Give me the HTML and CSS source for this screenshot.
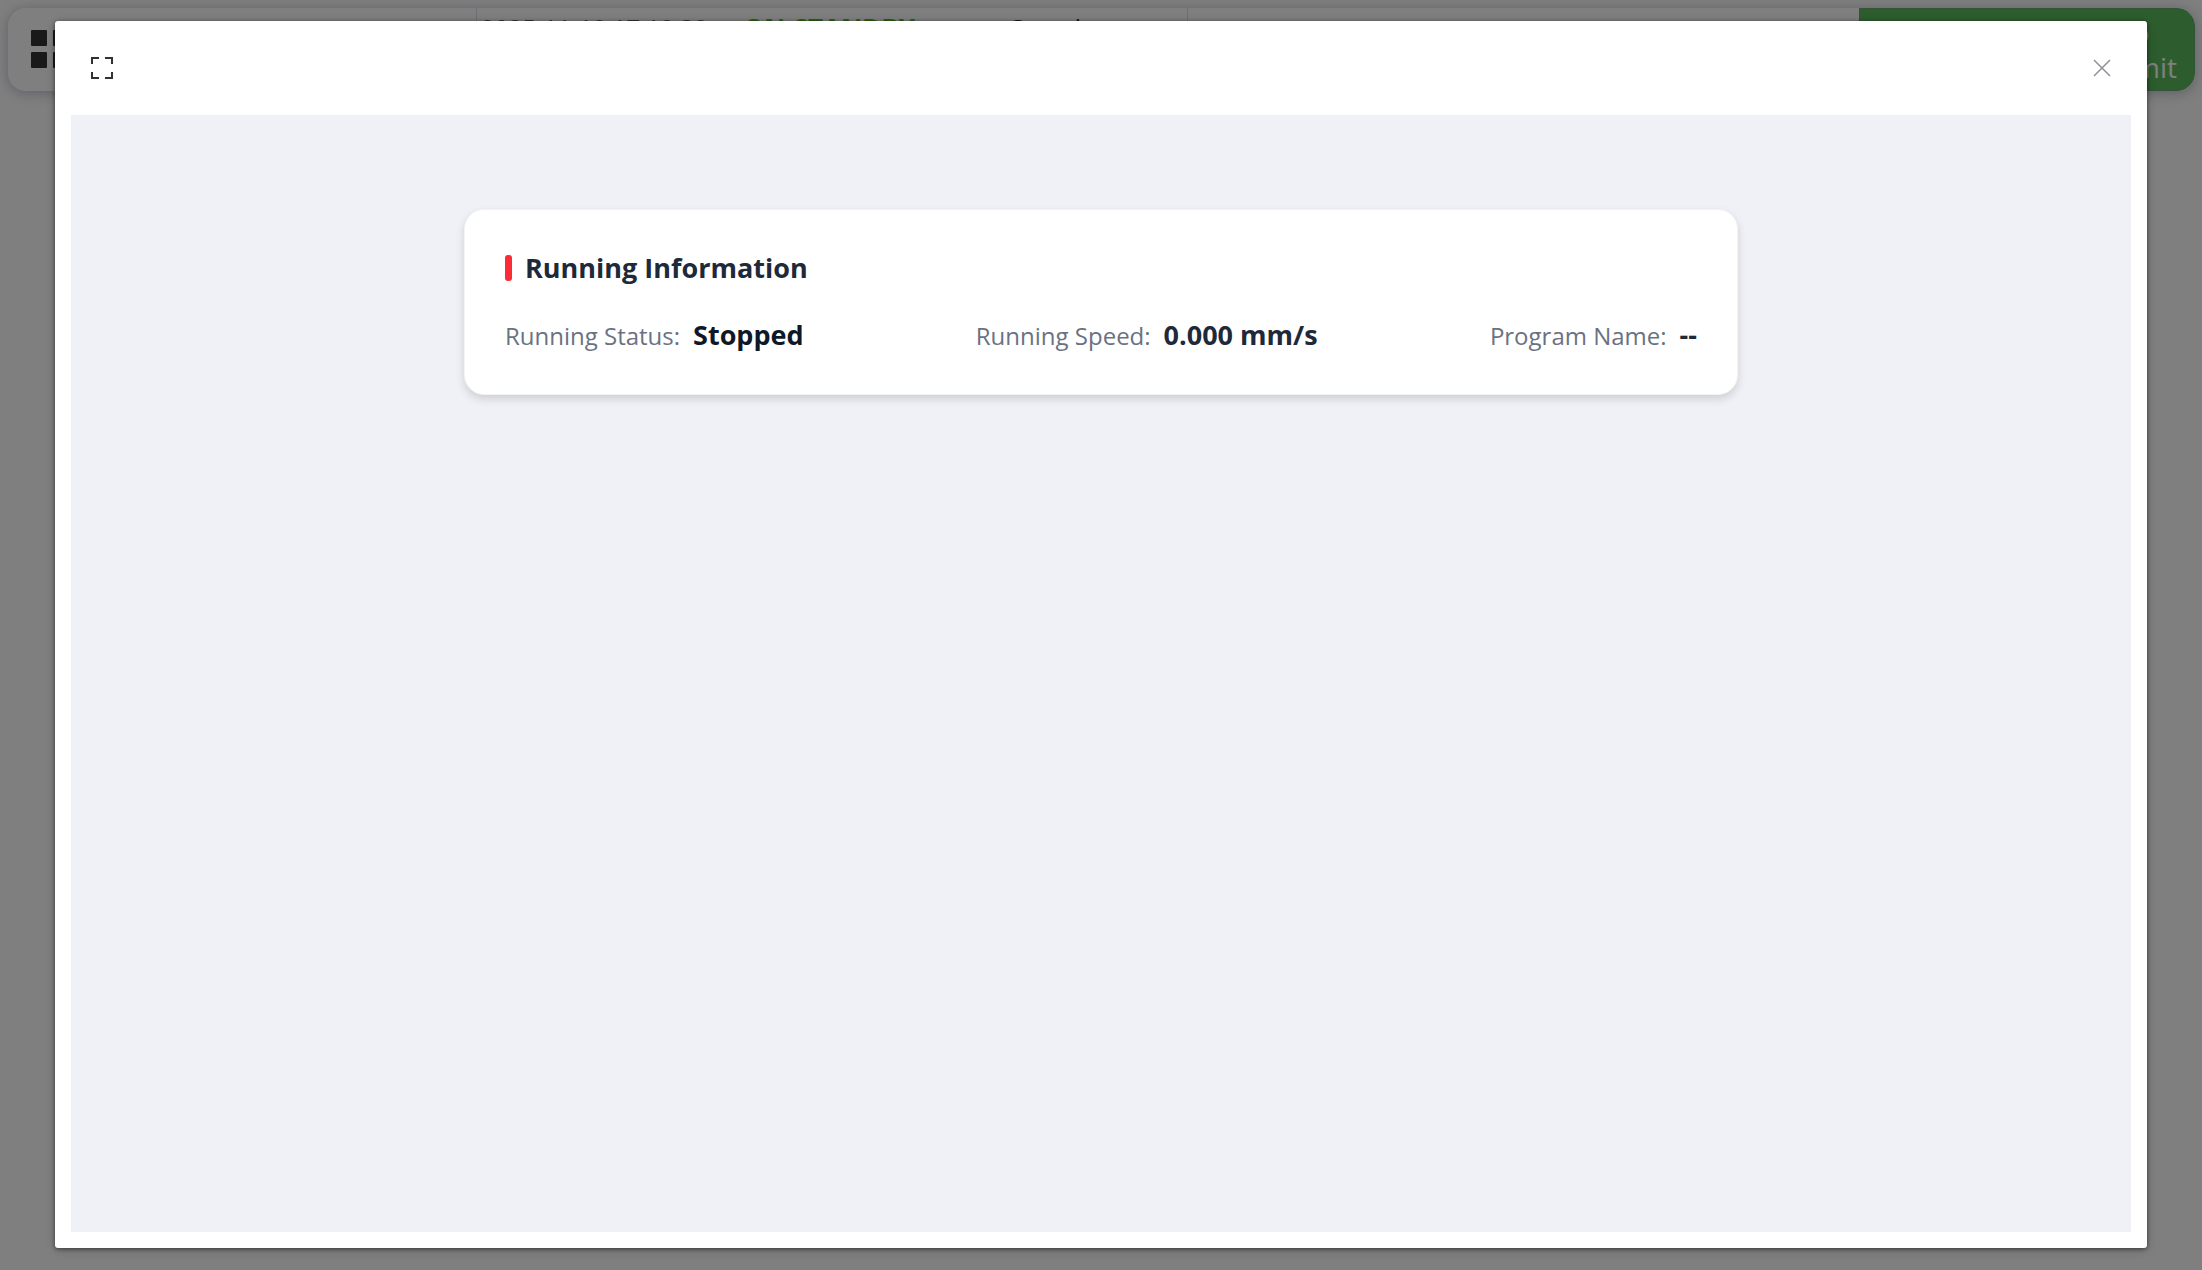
FILE: index.html
```
<!DOCTYPE html>
<html lang="en">
<head>
  <meta charset="UTF-8">
  <meta name="viewport" content="width=device-width, initial-scale=1.0">
  <title>Running Information</title>
  <link rel="stylesheet" href="styles.css">
</head>
<body>
  <header class="top-bar">
    <div class="menu-cell">
      <button type="button" class="menu-btn" aria-label="Menu">
        <span></span><span></span><span></span><span></span>
      </button>
    </div>
    <div class="state-cell">
      <time class="clock">2025-11-18 17:18:38</time>
      <span class="state">ON-STANDBY</span>
      <span class="coord">Coord</span>
    </div>
    <div class="message-cell"></div>
    <button type="button" class="submit-btn">No<br>Submit</button>
  </header>

  <div class="overlay">
    <div class="modal" role="dialog" aria-modal="true" aria-labelledby="cardTitle">
      <div class="modal-header">
        <button type="button" class="icon-btn expand-btn" aria-label="Full screen">
          <svg width="22" height="22" viewBox="0 0 22 22" fill="none" stroke="currentColor" stroke-width="2">
            <path d="M1 7V1H8M14 1H21V7M21 15V21H14M8 21H1V15"/>
          </svg>
        </button>
        <button type="button" class="icon-btn close-btn" aria-label="Close">
          <svg width="18" height="18" viewBox="0 0 18 18" fill="none" stroke="currentColor" stroke-width="1.6">
            <path d="M1 1L17 17M17 1L1 17"/>
          </svg>
        </button>
      </div>

      <div class="panel">
        <section class="card">
          <h2 class="card-title" id="cardTitle">Running Information</h2>
          <dl class="info-row">
            <div class="info-item">
              <dt>Running Status:</dt>
              <dd class="status">Stopped</dd>
            </div>
            <div class="info-item">
              <dt>Running Speed:</dt>
              <dd>0.000 mm/s</dd>
            </div>
            <div class="info-item">
              <dt>Program Name:</dt>
              <dd>--</dd>
            </div>
          </dl>
        </section>
      </div>
    </div>
  </div>
</body>
</html>
```

FILE: styles.css
```
* {
  margin: 0;
  padding: 0;
  box-sizing: border-box;
}

body {
  height: 100vh;
  padding: 8px 7px 0 8px;
  overflow: hidden;
  background-color: #ffffff;
  font-family: 'Segoe UI', 'Open Sans', 'Noto Sans', sans-serif;
}

button {
  border: none;
  background: none;
  font-family: inherit;
  cursor: pointer;
}

/* top bar */
.top-bar {
  display: grid;
  grid-template-columns: 468px 712px 1fr 336px;
  height: 83px;
  border-radius: 18px;
  background-color: #ffffff;
  box-shadow: 0 2px 14px rgba(60, 70, 110, 0.35);
  overflow: hidden;
}

.menu-cell {
  padding: 22px 23px;
}

.menu-btn {
  display: grid;
  grid-template-columns: 16px 16px;
  gap: 6px;
}

.menu-btn span {
  height: 16px;
  border-radius: 1px;
  background-color: #333333;
}

.state-cell {
  display: flex;
  align-items: flex-start;
  padding: 4px;
  border-left: 1px solid #dcdfe6;
  border-right: 1px solid #dcdfe6;
  font-size: 24px;
  line-height: 32px;
  white-space: nowrap;
}

.clock {
  color: #666666;
}

.state {
  margin-left: 36px;
  color: #52c41a;
  font-size: 26px;
  font-weight: 700;
}

.coord {
  margin-left: 92px;
  color: #303133;
  font-size: 26px;
}

.submit-btn {
  padding: 0 17px;
  border: 1px solid #67a869;
  border-radius: 0 18px 18px 0;
  background-color: #5aba5c;
  color: #ffffff;
  font-size: 28px;
  line-height: 35px;
  display: flex;
  align-items: center;
  justify-content: flex-end;
}

/* dialog */
.overlay {
  position: fixed;
  inset: 0;
  display: flex;
  justify-content: center;
  padding: 21px 0 22px;
  background-color: rgba(0, 0, 0, 0.5);
}

.modal {
  display: flex;
  flex-direction: column;
  width: 95%;
  border-radius: 3px;
  background-color: #ffffff;
  box-shadow: 0 1px 4px rgba(0, 0, 0, 0.5), 0 2px 12px rgba(0, 0, 0, 0.2);
}

.modal-header {
  display: flex;
  align-items: center;
  justify-content: space-between;
  height: 94px;
  padding: 0 36px;
}

.icon-btn svg {
  display: block;
}

.expand-btn {
  color: #303133;
}

.close-btn {
  color: #909399;
}

.panel {
  flex: 1;
  margin: 0 16px 16px;
  padding: 94px 40px 40px;
  background-color: #f0f1f6;
}

.card {
  max-width: 1274px;
  margin: 0 auto;
  padding: 39px 40px;
  border: 1px solid #f3f4f6;
  border-radius: 20px;
  background-color: #ffffff;
  box-shadow: 0 4px 8px rgba(0, 0, 0, 0.14);
}

.card-title {
  display: flex;
  align-items: center;
  gap: 13px;
  margin-bottom: 29px;
  color: #1e2939;
  font-size: 27px;
  font-weight: 700;
  line-height: 38px;
}

.card-title::before {
  content: '';
  width: 7px;
  height: 26px;
  border-radius: 3px;
  background-color: #fb2c36;
}

.info-row {
  display: flex;
  justify-content: space-between;
}

.info-item {
  display: flex;
  align-items: baseline;
  gap: 13px;
  line-height: 38px;
}

.info-item dt {
  color: #6a7282;
  font-size: 24px;
}

.info-item dd {
  color: #1e2939;
  font-size: 27px;
  font-weight: 700;
}

.info-item .status {
  color: #101828;
}
```
